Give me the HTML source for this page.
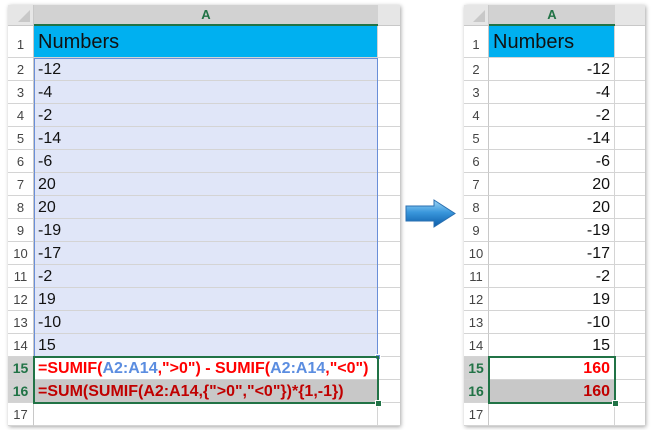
<!DOCTYPE html><html><head><style>
body{margin:0;width:658px;height:430px;background:#fff;position:relative;overflow:hidden;font-family:"Liberation Sans",sans-serif}
.s{position:absolute;background:#fff;box-shadow:1px 1px 4px rgba(0,0,0,.35)}
.c{position:absolute;box-sizing:border-box}
.rn{color:#444;font-size:13px;text-align:center;background:#fff;border-bottom:1px solid #d4d4d4;border-right:1px solid #c8c8c8}
.v{font-size:16px;color:#111;border-bottom:1px solid #d4d4d4;border-right:1px solid #d4d4d4;padding:0 4px;white-space:nowrap}
.b{position:absolute;box-sizing:border-box}
</style></head><body>
<div id="L" class="s" style="left:8px;top:5px;width:392px;height:421px"></div>
<div id="R" class="s" style="left:464px;top:5px;width:181px;height:421px"></div>
<svg style="position:absolute;left:404px;top:199px" width="54" height="32"><defs><linearGradient id="g" x1="0" y1="0" x2="0" y2="1"><stop offset="0" stop-color="#9fd6f6"/><stop offset=".45" stop-color="#3a98dc"/><stop offset="1" stop-color="#0a5aa8"/></linearGradient></defs><path d="M2 7 H30 V1 L51 14.5 L30 28 V22 H2 Z" fill="url(#g)" stroke="#2a6fb0" stroke-width="1"/></svg>
<script>
function build(id,colW,rnW,extraW,right,vals,hl){
 const p=document.getElementById(id);let h='';
 h+=`<div class="c" style="left:0;top:0;width:${rnW}px;height:21px;background:#e6e6e6;border-right:1px solid #c8c8c8;border-bottom:1px solid #c8c8c8"><div style="position:absolute;right:3px;bottom:3px;width:0;height:0;border-left:12px solid transparent;border-bottom:12px solid #c8c8c8"></div></div>`;
 h+=`<div class="c" style="left:${rnW}px;top:0;width:${colW}px;height:21px;background:#d2d2d2;border-bottom:2px solid #217346;text-align:center;font-size:13px;font-weight:bold;color:#217346;line-height:20px">A</div>`;
 h+=`<div class="c" style="left:${rnW+colW}px;top:0;width:${extraW}px;height:21px;background:#e6e6e6;border-bottom:1px solid #c8c8c8"></div>`;
 let y=21;
 for(let r=1;r<=17;r++){
  const hh=r==1?32:23;const sel=r==15||r==16;
  h+=`<div class="c rn" style="left:0;top:${y}px;width:${rnW}px;height:${hh}px;line-height:${r==1?38:23}px;${sel?'background:#d2d2d2;color:#217346;font-weight:bold;font-size:14px':''}">${r}</div>`;
  let bg='#fff',st='';
  if(r==1)bg='#00b0f0';
  else if(hl&&r<=14)bg='#e0e6f8';
  if(r==16)bg='#c8c8c8';
  let t=vals[r-1]||'';
  if(r==1)st='font-size:20px;line-height:32px;text-align:left;';
  else st=`line-height:23px;text-align:${right?'right':'left'};`;
  h+=`<div class="c v" style="left:${rnW}px;top:${y}px;width:${colW}px;height:${hh}px;background:${bg};${st}${right&&r>1?'padding-right:4px':''}">${t}</div>`;
  h+=`<div class="c v" style="left:${rnW+colW}px;top:${y}px;width:${extraW}px;height:${hh}px;border-right:none"></div>`;
  y+=hh;
 }
 p.innerHTML=h;
}
const nums=['Numbers','-12','-4','-2','-14','-6','20','20','-19','-17','-2','19','-10','15'];
const red='color:#f00;font-weight:bold;font-size:16px',blu='color:#5b8de0';
const L=nums.slice();
L.push(`<span style="${red}">=SUMIF(<span style="${blu}">A2:A14</span>,"&gt;0") - SUMIF(<span style="${blu}">A2:A14</span>,"&lt;0")</span>`);
L.push(`<span style="color:#c00000;font-weight:bold;font-size:16px">=SUM(SUMIF(A2:A14,{"&gt;0","&lt;0"})*{1,-1})</span>`);
build('L',344,26,22,false,L,true);
const R=nums.slice();
R.push(`<span style="color:#f00;font-weight:bold;font-size:16px">160</span>`);
R.push(`<span style="color:#c00000;font-weight:bold;font-size:16px">160</span>`);
build('R',126,25,30,true,R,false);
</script>
<div class="b" style="left:34px;top:58px;width:344px;height:299px;border:1px solid #6a8fd8"></div>
<div class="b" style="left:375px;top:354px;width:6px;height:6px;background:#6a8fd8;border:1px solid #fff"></div>
<div class="b" style="left:33px;top:356px;width:346px;height:48px;border:2px solid #217346"></div>
<div class="b" style="left:375px;top:400px;width:7px;height:7px;background:#217346;border:1px solid #fff"></div>
<div class="b" style="left:488px;top:356px;width:128px;height:48px;border:2px solid #217346"></div>
<div class="b" style="left:612px;top:400px;width:7px;height:7px;background:#217346;border:1px solid #fff"></div>
</body></html>
